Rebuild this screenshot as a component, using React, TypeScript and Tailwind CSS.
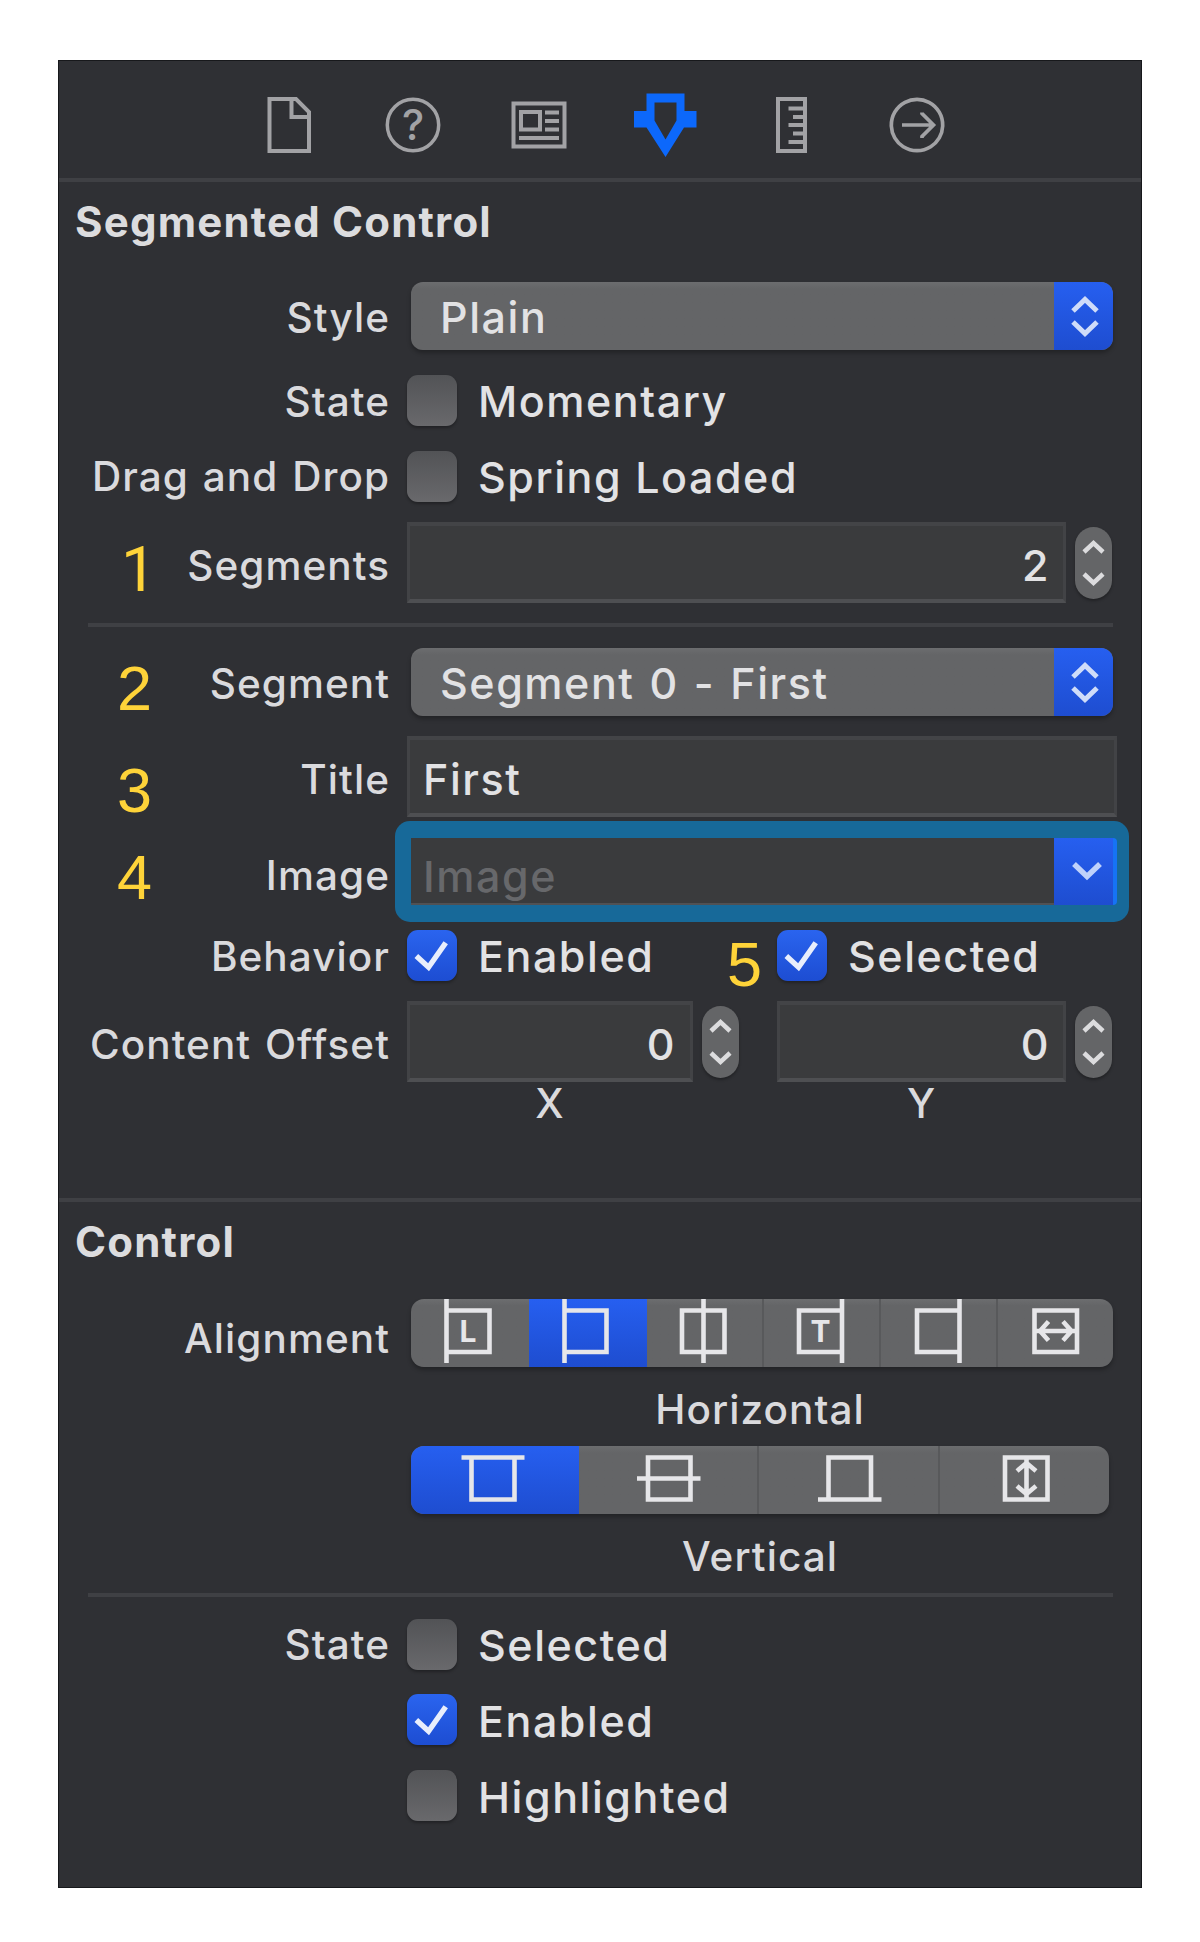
import type { ReactNode } from "react";
import clsx from "clsx";

const TEXT = "text-[43px] leading-[52px] tracking-[1.55px] text-[#e2e2e4]";
const LABEL = "text-[40.5px] leading-[52px] tracking-[1.05px] [word-spacing:2px] text-[#dadadd]";

type RowProps = {
  label?: string;
  className: string;
  labelClassName?: string;
  children: ReactNode;
};

function Row({ label, className, labelClassName, children }: RowProps) {
  return (
    <div className={clsx("relative flex items-center", className)}>
      <div className={clsx("w-[331px] shrink-0 whitespace-nowrap text-right", LABEL, labelClassName)}>{label}</div>
      {children}
    </div>
  );
}

function Marker({ children, className }: { children: string; className: string }) {
  return (
    <span className={clsx("absolute text-[63px] leading-none text-[#fed339]", className)}>{children}</span>
  );
}

function Checkbox({ label, checked = false }: { label: string; checked?: boolean }) {
  return (
    <div className="flex items-center gap-[21px]">
      <span
        className={clsx(
          "block h-[51px] w-[50px] shrink-0 rounded-[11px] shadow-[0_2px_3px_rgba(0,0,0,0.3)]",
          checked
            ? "bg-linear-to-b from-[#2a64ef] to-[#1d4dd2]"
            : "bg-linear-to-b from-[#525356] to-[#69696c]"
        )}
      >
        {checked ? (
          <svg viewBox="0 0 51 51" className="h-full w-full" fill="none" stroke="#e8eefc" strokeWidth="5.5">
            <path d="M9.5 26 22 37.5 39.5 12.5" />
          </svg>
        ) : null}
      </span>
      <span className={clsx("whitespace-nowrap pt-0.5", TEXT)}>{label}</span>
    </div>
  );
}

function Select({ value }: { value: string }) {
  return (
    <div className="ml-[21px] flex h-full w-[702px] overflow-hidden rounded-[12px] bg-linear-to-b from-[#6c6d6f] from-0% via-[#646567] via-10% to-[#646567] shadow-[0_3px_4px_rgba(0,0,0,0.28)]">
      <div className={clsx("flex flex-1 items-center whitespace-pre pl-[29px] pt-0.5 [word-spacing:2px]", TEXT)}>
        {value}
      </div>
      <div className="w-[59px] bg-linear-to-b from-[#265ff0] to-[#1e4dd0]">
        <svg viewBox="0 0 59 68" className="h-full w-full" fill="none" stroke="#cfdcf9" strokeWidth="5">
          <path d="M19 29 31 17.5 43 29M19 40 31 51.5 43 40" />
        </svg>
      </div>
    </div>
  );
}

function Field({ value, className }: { value: string; className: string }) {
  return (
    <div
      className={clsx(
        "flex h-[81px] items-center border-4 border-x-[3px] border-x-[#424346] border-t-[#434447] border-b-[#4e4f52] bg-[#3a3b3d] pt-[5px]",
        TEXT,
        className
      )}
    >
      {value}
    </div>
  );
}

function Stepper() {
  return (
    <div className="ml-[9px] h-[72px] w-[37px] rounded-full bg-[#646567] shadow-[0_2px_3px_rgba(0,0,0,0.3)]">
      <svg viewBox="0 0 37 72" className="h-full w-full" fill="none" stroke="#dcdcde" strokeWidth="4.5">
        <path d="M9 25 18.500 16 28 25M9 47 18.500 56 28 47" />
      </svg>
    </div>
  );
}

function Toolbar() {
  const icons = [
    <path key="file" d="M14.500 6H41L54 19V58H14.500ZM36.500 6V24H54" />,
    <g key="help">
      <circle cx="32" cy="32" r="25.7" strokeWidth="3.5" />
      <text x="32" y="46.5" textAnchor="middle" fontSize="42" fill="#a2a2a5" stroke="none">
        ?
      </text>
    </g>,
    <path key="identity" d="M6.500 10.500H57.500V53.500H6.500ZM14 19H33V36.500H14ZM38 19.500H52M38 28H52M38 36.500H52M12 45H52" />,
    <path
      key="attributes"
      d="M13.500 .5H51.500V18H63.500V34.500H51L32.500 64 13.500 34.500H1V18H13.500ZM21.500 9.500V27.500L32.500 46.500 43.500 27.500V9.500Z"
      fill="#0c68fb"
      fillRule="evenodd"
      stroke="none"
    />,
    <path key="size" d="M19 6H46V58H19ZM29.500 15.500H46M34 24H46M29.500 32H46M34 40.500H46M29.500 49H46" />,
    <path key="connections" d="M17 32H48M37 19.500V20.500L48.500 32 37 43.500V45M32 6.300a25.700 25.700 0 1 0 .01 0Z" strokeWidth="3.7" />
  ];

  return (
    <div className="flex h-[117px] pl-[165px] pt-8">
      {icons.map((icon, index) => (
        <div key={index} className="flex w-[126px] justify-center">
          <svg width="64" height="66" viewBox="0 0 64 66" fill="none" stroke="#a2a2a5" strokeWidth="4">
            {icon}
          </svg>
        </div>
      ))}
    </div>
  );
}

type Segment = { icon: ReactNode; className: string; active?: boolean };

function SegmentedBar({ segments, className }: { segments: Segment[]; className: string }) {
  return (
    <div
      className={clsx(
        "ml-[21px] flex h-[68px] overflow-hidden rounded-[13px] bg-linear-to-b from-[#6c6d6f] from-0% via-[#646567] via-10% to-[#646567] shadow-[0_3px_4px_rgba(0,0,0,0.28)]",
        className
      )}
    >
      {segments.map((segment, index) => (
        <div
          key={index}
          className={clsx(
            "flex justify-center",
            segment.className,
            segment.active && "bg-linear-to-b from-[#265ff0] to-[#1e4dd0]"
          )}
        >
          <svg width="72" height="68" viewBox="0 0 72 68" fill="none" stroke="#e6e6e9" strokeWidth="4.6">
            {segment.icon}
          </svg>
        </div>
      ))}
    </div>
  );
}

const letter = { fontSize: 30, fontWeight: 700, fill: "#e6e6e9", stroke: "none", textAnchor: "middle" as const };
const divided = "border-l-2 border-[#58595b]";

const horizontal: Segment[] = [
  {
    className: "w-[118px]",
    icon: (
      <>
        <path d="M12.500 0V64M12.500 11.500H55.500V53H12.500" />
        <text x="34" y="43" {...letter}>L</text>
      </>
    )
  },
  { className: "w-[118px]", active: true, icon: <path d="M12.500 0V64M12.500 11.500H54.500V53H12.500" /> },
  { className: "w-[115px]", icon: <path d="M34.500 0V64M13 11.500H55.500V53H13Z" /> },
  {
    className: clsx("w-[117px]", divided),
    icon: (
      <>
        <path d="M56 0V64M56 11.500H13V53H56" />
        <text x="34.500" y="43" {...letter}>T</text>
      </>
    )
  },
  { className: clsx("w-[117px]", divided), icon: <path d="M56.500 0V64M56.500 11.500H14V53H56.500" /> },
  {
    className: clsx("w-[117px]", divided),
    icon: <path d="M14.500 11.500H57V53H14.500ZM14.500 32H57M28.500 22.500 20 32 28.500 41.500M43 22.500 51.500 32 43 41.500" />
  }
];

const vertical: Segment[] = [
  { className: "w-[168px]", active: true, icon: <path d="M2.500 11.500H65.500M12.500 11.500V53.500H55.500V11.500" /> },
  { className: "w-[178px]", icon: <path d="M5 32.500H68.500M16 11.500H58.500V53.500H16Z" /> },
  { className: clsx("w-[181px]", divided), icon: <path d="M5 53.500H68.500M15.500 53.500V11.500H58V53.500" /> },
  {
    className: clsx("w-[171px]", divided),
    icon: <path d="M16 11.500H58.500V53.500H16ZM37.500 11.500V53.500M28 25 37.500 17 47 25M28 40 37.500 48 47 40" />
  }
];

function Caption({ children }: { children: string }) {
  return (
    <div className={clsx("flex h-[79px] items-center pl-[348px] pt-[7px]", LABEL)}>
      <span className="w-[706px] text-center">{children}</span>
    </div>
  );
}

function Heading({ children, className }: { children: string; className: string }) {
  return (
    <h2 className={clsx("pl-4 text-[42px] font-bold leading-[52px] tracking-[1.2px] text-[#dcdcde]", className)}>
      {children}
    </h2>
  );
}

export default function App() {
  return (
    <div className="h-[1942px] w-[1200px] bg-white px-[58px] pt-[60px]">
      <main className="h-[1828px] w-[1084px] overflow-hidden border border-[#17181b] bg-[#2f3034] font-['Inter',sans-serif] font-medium">
        <Toolbar />

        <section className="border-t-4 border-[#3f4044]">
          <Heading className="h-[100px] pt-[14px]">Segmented Control</Heading>
          <Row label="Style" className="h-[68px]" labelClassName="pt-1">
            <Select value="Plain" />
          </Row>
          <Row label="State" className="mt-6 h-[52px]" labelClassName="pt-1 mr-[17px]">
            <Checkbox label="Momentary" />
          </Row>
          <Row label="Drag and Drop" className="mt-6 h-[52px]" labelClassName="pt-0.5 mr-[17px]">
            <Checkbox label="Spring Loaded" />
          </Row>
          <Row label="Segments" className="mt-5 h-[81px]" labelClassName="pt-1.5 mr-[17px]">
            <Marker className="left-[62px] top-[16px] font-['Roboto',sans-serif] font-normal">1</Marker>
            <Field value="2" className="w-[659px] justify-end pr-[13px]" />
            <Stepper />
          </Row>

          <div className="ml-[29px] mt-5 h-1 w-[1025px] bg-[#3f4044]" />

          <Row label="Segment" className="mt-[21px] h-[68px]" labelClassName="pt-[3px]">
            <Marker className="left-[58px] top-[9px] font-['Liberation_Sans',sans-serif] font-normal">2</Marker>
            <Select value="Segment 0 - First" />
          </Row>
          <Row label="Title" className="mt-5 h-[81px]" labelClassName="pt-1.5 mr-[17px]">
            <Marker className="left-[58px] top-[23px] font-['Liberation_Sans',sans-serif] font-normal">3</Marker>
            <Field value="First" className="w-[710px] pl-[13px]" />
          </Row>
          <Row label="Image" className="mt-[3px] h-[102px]" labelClassName="pt-[9px]">
            <Marker className="left-[58px] top-[26px] font-['Liberation_Sans',sans-serif] font-normal">4</Marker>
            <div className="ml-[5px] flex h-[101px] w-[734px] rounded-[15px] bg-[#176999] px-4 pb-[17px] pr-3 pt-[17px]">
              <div className="flex flex-1 items-center border-b-2 border-[#505154] bg-[#3a3b3d] pl-3 pt-[11px] text-[43px] leading-[52px] tracking-[1.55px] text-[#67686b]">
                Image
              </div>
              <div className="w-[63px] rounded-r-[4px] border-r-4 border-[#1673f5] bg-linear-to-b from-[#265ff0] to-[#1e4dd0]">
                <svg width="59" height="66" viewBox="0 0 59 66" fill="none" stroke="#bfd2fb" strokeWidth="5.5">
                  <path d="M20 26 33 38.5 46 26" />
                </svg>
              </div>
            </div>
          </Row>
          <Row label="Behavior" className="mt-[7px] h-[52px]" labelClassName="pt-[3px] mr-[17px]">
            <div className="w-[370px]">
              <Checkbox label="Enabled" checked />
            </div>
            <Marker className="left-[668px] top-[4px] font-['Liberation_Sans',sans-serif] font-normal">5</Marker>
            <Checkbox label="Selected" checked />
          </Row>
          <Row label="Content Offset" className="mt-5 h-[81px]" labelClassName="pt-1.5 mr-[17px]">
            <Field value="0" className="w-[286px] justify-end pr-[14px]" />
            <Stepper />
            <Field value="0" className="ml-[38px] w-[289px] justify-end pr-[13px]" />
            <Stepper />
          </Row>
          <div className={clsx("flex h-[42px] items-center pl-[348px] pt-0.5", LABEL)}>
            <span className="w-[286px] text-center">X</span>
            <span className="ml-[84px] w-[289px] text-center">Y</span>
          </div>
        </section>

        <section className="mt-[74px] border-t-4 border-[#3f4044]">
          <Heading className="h-[97px] pt-[14px]">Control</Heading>
          <Row label="Alignment" className="h-[68px]" labelClassName="pt-[11px]">
            <SegmentedBar segments={horizontal} className="w-[702px]" />
          </Row>
          <Caption>Horizontal</Caption>
          <Row className="h-[68px]">
            <SegmentedBar segments={vertical} className="w-[698px]" />
          </Row>
          <Caption>Vertical</Caption>

          <div className="ml-[29px] h-1 w-[1025px] bg-[#3f4044]" />

          <Row label="State" className="mt-[21px] h-[52px]" labelClassName="pt-0.5 mr-[17px]">
            <Checkbox label="Selected" />
          </Row>
          <Row className="mt-6 h-[51px]" labelClassName="mr-[17px]">
            <Checkbox label="Enabled" checked />
          </Row>
          <Row className="mt-[25px] h-[51px]" labelClassName="mr-[17px]">
            <Checkbox label="Highlighted" />
          </Row>
        </section>
      </main>
    </div>
  );
}
